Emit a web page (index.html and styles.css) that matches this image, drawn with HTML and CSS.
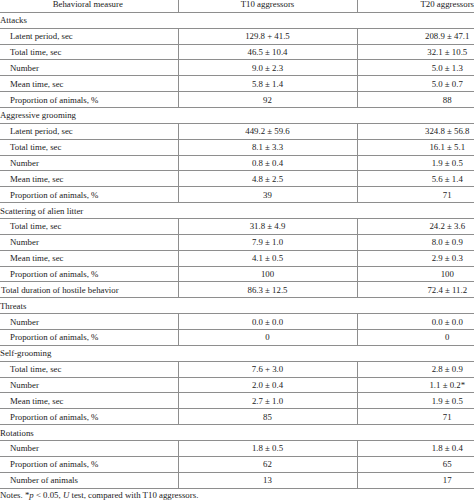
FILE: index.html
```html
<!DOCTYPE html>
<html>
<head>
<meta charset="utf-8">
<link rel="stylesheet" href="styles.css">
</head>
<body>
<div class="page">
<table class="data">
<colgroup><col class="c1"><col class="c2"><col class="c3"></colgroup>
<tr class="head"><td>Behavioral measure</td><td>T10 aggressors</td><td>T20 aggressors</td></tr>
<tr class="sec"><td colspan="3">Attacks</td></tr>
<tr><td class="sub">Latent period, sec</td><td>129.8 + 41.5</td><td>208.9 ± 47.1</td></tr>
<tr><td class="sub">Total time, sec</td><td>46.5 ± 10.4</td><td>32.1 ± 10.5</td></tr>
<tr><td class="sub">Number</td><td>9.0 ± 2.3</td><td>5.0 ± 1.3</td></tr>
<tr><td class="sub">Mean time, sec</td><td>5.8 ± 1.4</td><td>5.0 ± 0.7</td></tr>
<tr><td class="sub">Proportion of animals, %</td><td>92</td><td>88</td></tr>
<tr class="sec"><td colspan="3">Aggressive grooming</td></tr>
<tr><td class="sub">Latent period, sec</td><td>449.2 ± 59.6</td><td>324.8 ± 56.8</td></tr>
<tr><td class="sub">Total time, sec</td><td>8.1 ± 3.3</td><td>16.1 ± 5.1</td></tr>
<tr><td class="sub">Number</td><td>0.8 ± 0.4</td><td>1.9 ± 0.5</td></tr>
<tr><td class="sub">Mean time, sec</td><td>4.8 ± 2.5</td><td>5.6 ± 1.4</td></tr>
<tr><td class="sub">Proportion of animals, %</td><td>39</td><td>71</td></tr>
<tr class="sec"><td colspan="3">Scattering of alien litter</td></tr>
<tr><td class="sub">Total time, sec</td><td>31.8 ± 4.9</td><td>24.2 ± 3.6</td></tr>
<tr><td class="sub">Number</td><td>7.9 ± 1.0</td><td>8.0 ± 0.9</td></tr>
<tr><td class="sub">Mean time, sec</td><td>4.1 ± 0.5</td><td>2.9 ± 0.3</td></tr>
<tr><td class="sub">Proportion of animals, %</td><td>100</td><td>100</td></tr>
<tr><td class="top">Total duration of hostile behavior</td><td>86.3 ± 12.5</td><td>72.4 ± 11.2</td></tr>
<tr class="sec"><td colspan="3">Threats</td></tr>
<tr><td class="sub">Number</td><td>0.0 ± 0.0</td><td>0.0 ± 0.0</td></tr>
<tr><td class="sub">Proportion of animals, %</td><td>0</td><td>0</td></tr>
<tr class="sec"><td colspan="3">Self-grooming</td></tr>
<tr><td class="sub">Total time, sec</td><td>7.6 + 3.0</td><td>2.8 ± 0.9</td></tr>
<tr><td class="sub">Number</td><td>2.0 ± 0.4</td><td>1.1 ± 0.2*</td></tr>
<tr><td class="sub">Mean time, sec</td><td>2.7 ± 1.0</td><td>1.9 ± 0.5</td></tr>
<tr><td class="sub">Proportion of animals, %</td><td>85</td><td>71</td></tr>
<tr class="sec"><td colspan="3">Rotations</td></tr>
<tr><td class="sub">Number</td><td>1.8 ± 0.5</td><td>1.8 ± 0.4</td></tr>
<tr><td class="sub">Proportion of animals, %</td><td>62</td><td>65</td></tr>
<tr><td class="sub">Number of animals</td><td>13</td><td>17</td></tr>
</table>
<p class="notes">Notes. *<i>p</i> &lt; 0.05, <i>U</i> test, compared with T10 aggressors.</p>
</div>
</body>
</html>
```

FILE: styles.css
```css
html, body {
  margin: 0;
  padding: 0;
  background: #fff;
  overflow: hidden;
}
.page {
  width: 474px;
  height: 501px;
  overflow: hidden;
  font-family: "Liberation Serif", "Times New Roman", serif;
  font-size: 8.8px;
  color: #222;
}
.data {
  border-collapse: collapse;
  table-layout: fixed;
  width: 539px;
  margin: -4px 0 0 -2px;
}
.c1 { width: 180px; }
.c2 { width: 179px; }
.c3 { width: 180px; }
.data tr { height: 15.86px; }
.data td {
  padding: 0;
  border-top: 1px solid #8e8e8e;
  border-bottom: 1px solid #8e8e8e;
  border-left: 1px solid #8e8e8e;
  text-align: center;
  vertical-align: middle;
  line-height: 10px;
  white-space: nowrap;
}
.data td:first-child { border-left: none; text-align: left; }
.data .head td:first-child { text-align: center; }
.data td.sub { padding-left: 12px; }
.data td.top { padding-left: 3px; }
.data .sec td { padding-left: 2px; border-left: none; }
.notes {
  margin: 0;
  padding-left: 0;
  line-height: 12px;
}
```
